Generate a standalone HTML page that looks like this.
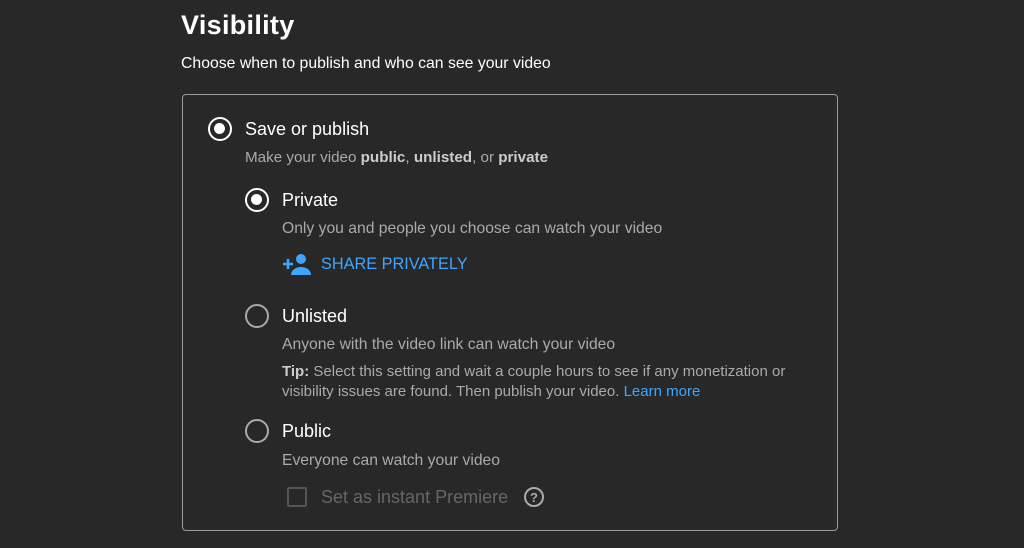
<!DOCTYPE html>
<html><head><meta charset="utf-8"><style>
body{margin:0;width:1024px;height:548px;background:#282828;font-family:"Liberation Sans",sans-serif;position:relative;overflow:hidden;color:#fff}
.a{position:absolute;white-space:nowrap;line-height:1}
.box{position:absolute;left:182px;top:94px;width:656px;height:437px;border:1px solid #9a9a9a;border-radius:4px;box-sizing:border-box}
.r{position:absolute;width:24px;height:24px;border:2.5px solid #fff;border-radius:50%;box-sizing:border-box}
.r.on::after{content:"";position:absolute;left:4px;top:4px;width:11px;height:11px;border-radius:50%;background:#fff}
.r.off{border-color:#aaa}
.g{color:#aaa;font-size:15.7px}
.t{font-size:18px;color:#fff}
</style></head><body>
<div class="a" style="left:181px;top:12px;font-size:27px;font-weight:bold;letter-spacing:0.3px">Visibility</div>
<div class="a" style="left:181px;top:56px;font-size:15.8px;color:#fff">Choose when to publish and who can see your video</div>
<div class="box"></div>
<div class="r on" style="left:208px;top:117px"></div>
<div class="a t" style="left:245px;top:120px">Save or publish</div>
<div class="a g" style="left:245px;top:150px;font-size:15.2px">Make your video <b style="color:#ccc">public</b>, <b style="color:#ccc">unlisted</b>, or <b style="color:#ccc">private</b></div>
<div class="r on" style="left:245px;top:188px"></div>
<div class="a t" style="left:282px;top:191px">Private</div>
<div class="a g" style="left:282px;top:221px">Only you and people you choose can watch your video</div>
<svg class="a" style="left:282px;top:253px" width="30" height="22" viewBox="0 0 30 22"><path d="M1 11h10M6 6v10" stroke="#3ea6ff" stroke-width="2.6"/><circle cx="19" cy="6" r="5" fill="#3ea6ff"/><path d="M9 22c0-5 5-8 10-8s10 3 10 8z" fill="#3ea6ff"/></svg>
<div class="a" style="left:321px;top:256px;font-size:16.3px;color:#3ea6ff">SHARE PRIVATELY</div>
<div class="r off" style="left:245px;top:304px"></div>
<div class="a t" style="left:282px;top:307px">Unlisted</div>
<div class="a g" style="left:282px;top:337px">Anyone with the video link can watch your video</div>
<div class="a" style="left:282px;top:362px;font-size:15px;color:#aaa;line-height:20px;white-space:normal;width:520px"><b style="color:#ccc">Tip:</b> Select this setting and wait a couple hours to see if any monetization or visibility issues are found. Then publish your video. <span style="color:#3ea6ff">Learn more</span></div>
<div class="r off" style="left:245px;top:419px"></div>
<div class="a t" style="left:282px;top:422px">Public</div>
<div class="a g" style="left:282px;top:453px">Everyone can watch your video</div>
<div class="a" style="left:287px;top:487px;width:20px;height:20px;border:2px solid #555;border-radius:2px;box-sizing:border-box"></div>
<div class="a" style="left:321px;top:488px;font-size:18px;color:#666">Set as instant Premiere</div>
<svg class="a" style="left:523px;top:486px" width="22" height="22" viewBox="0 0 22 22"><circle cx="11" cy="11" r="9" fill="none" stroke="#aaa" stroke-width="2"/><text x="11" y="16" text-anchor="middle" font-size="13" font-weight="bold" fill="#aaa" font-family="Liberation Sans">?</text></svg>
</body></html>
